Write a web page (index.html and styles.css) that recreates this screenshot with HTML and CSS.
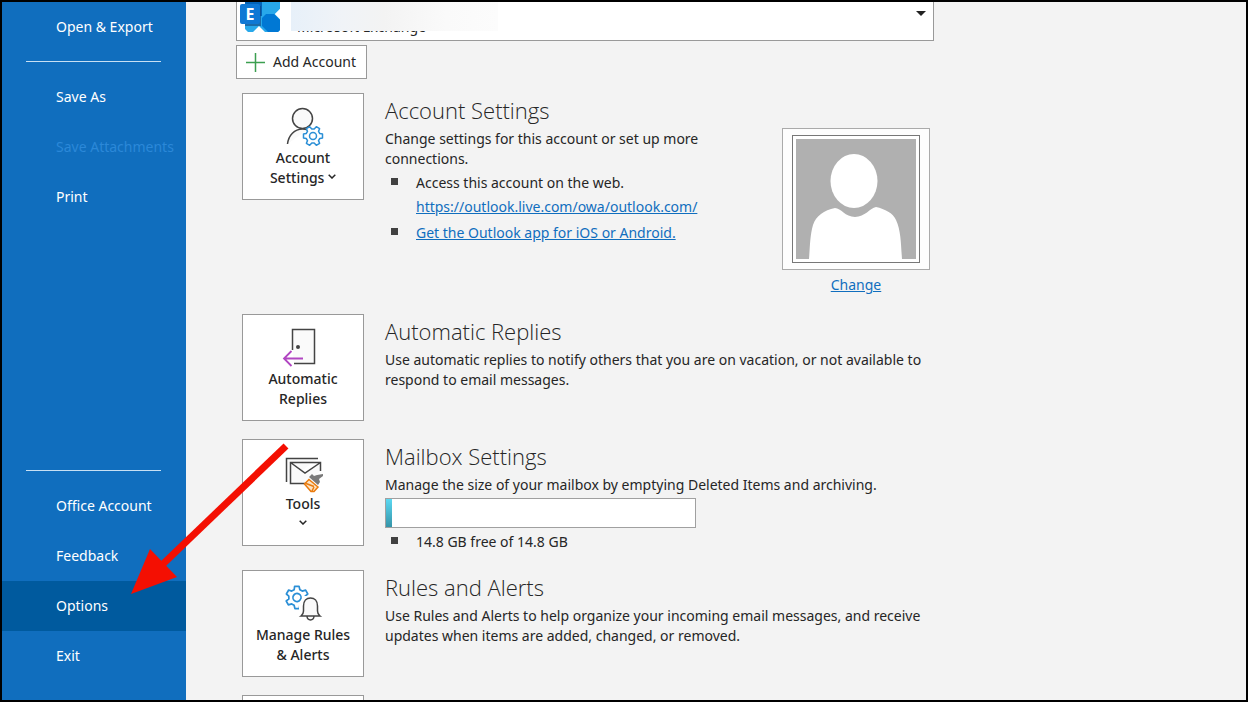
FILE: index.html
```
<!DOCTYPE html>
<html lang="en">

<head>
  <meta charset="UTF-8" />
  <meta name="viewport" content="width=device-width, initial-scale=1.0" />
  <title>Account Information</title>
  <link rel="stylesheet" href="styles.css">
</head>

<body>
  <nav class="sidebar">
    <a class="nav-item" href="#open">Open &amp; Export</a>
    <hr class="nav-rule">
    <a class="nav-item" href="#save">Save As</a>
    <a class="nav-item disabled" aria-disabled="true">Save Attachments</a>
    <a class="nav-item" href="#print">Print</a>
    <div class="nav-bottom">
      <hr class="nav-rule">
      <a class="nav-item" href="#account">Office Account</a>
      <a class="nav-item" href="#feedback">Feedback</a>
      <a class="nav-item active" href="#options">Options</a>
      <a class="nav-item" href="#exit">Exit</a>
    </div>
  </nav>

  <main class="content">
    <div class="account-picker">
      <select class="account-select" aria-label="Account">
        <option>Microsoft Exchange</option>
      </select>
      <svg class="exchange-logo" width="40" height="30" viewBox="0 0 40 30" aria-hidden="true">
        <path fill="#28a8ea" d="M5 0h35v7l-5 5 5 5v11l-2 2H25l-6-6-6 6H8l-3-3z" />
        <path fill="#0364b8" d="M5 0h17v14H5z" />
        <path fill="#fff" d="M40 7v10l-5-5zM19 25l5 5H14z" />
        <path fill="#0078d4" d="M26 12h8l6 6v10l-2 2H28l-6-6v-8z" />
        <path fill="#14447d" opacity=".6" d="M5 4h16v20H5z" />
        <rect width="20" height="20" y="2" rx="2" fill="#0f78d4" />
        <text class="logo-letter" x="10" y="18" text-anchor="middle">E</text>
      </svg>
      <span class="name-mask"></span>
      <svg class="select-arrow" width="10" height="5" viewBox="0 0 10 5" aria-hidden="true">
        <path d="M0 0h10L5 5z" fill="#222" />
      </svg>
    </div>

    <button class="add-btn" type="button">
      <svg width="19" height="19" viewBox="0 0 19 19" aria-hidden="true">
        <path d="M9.5 0v19M0 9.5h19" stroke="#3c9f50" stroke-width="1.5" />
      </svg>
      Add Account
    </button>

    <div class="sections">
      <section class="section">
        <button class="tile" type="button">
          <svg class="tile-icon" viewBox="0 0 42 42" aria-hidden="true">
            <circle cx="20.5" cy="12.5" r="10" class="ink" />
            <path class="ink" d="M5.5 38c1-8.500 7-15 15-15 2 0 3.500.2 5 .8" />
            <g transform="translate(31 30)">
              <path class="gear" d="M9.500-2v4L6.800 2.500 5.500 4.600 6.600 7.300 3.300 9.300 1.200 7.100H-1.200L-3.300 9.300-6.600 7.300-5.500 4.600-6.800 2.500-9.500 2v-4L-6.800-2.500-5.500-4.600-6.600-7.300-3.300-9.300-1.200-7.100H1.200L3.300-9.300 6.600-7.300 5.500-4.600 6.800-2.500z" />
              <circle class="gear" r="3.500" />
            </g>
          </svg>
          <span>Account<br>Settings
            <svg class="chevron" width="8" height="5" viewBox="0 0 8 5" aria-hidden="true"><path d="M.7.700 4 4 7.300.700" /></svg>
          </span>
        </button>
        <div class="details">
          <h2>Account Settings</h2>
          <p>Change settings for this account or set up more connections.</p>
          <ul class="links">
            <li>Access this account on the web.<a class="web-link" href="#owa">https://outlook.live.com/owa/outlook.com/</a></li>
            <li><a href="#mobile">Get the Outlook app for iOS or Android.</a></li>
          </ul>
        </div>
        <div class="photo">
          <div class="photo-card">
            <svg class="avatar" viewBox="0 0 120 120" role="img" aria-label="Account photo">
              <rect width="120" height="120" fill="#b0b0b0" />
              <ellipse cx="58" cy="42" rx="23.500" ry="27" fill="#fff" />
              <path d="M13 120c1-12 1-24 4-34 3-9 11-15 22-17 6 0 10 9 20 9s15-9 21-10c9 2 17 6 20 13 5 10 5 26 6 39z" fill="#fff" />
            </svg>
          </div>
          <a href="#photo">Change</a>
        </div>
      </section>

      <section class="section">
        <button class="tile" type="button">
          <svg class="tile-icon" viewBox="0 0 42 42" aria-hidden="true">
            <path class="ink" d="M10.500 23V2.500h22v34H12" />
            <circle cx="16" cy="20" r="2" fill="#444" />
            <path class="reply" d="M21 31.500H2M9.500 24 2 31.500 9.500 39" />
          </svg>
          <span>Automatic<br>Replies</span>
        </button>
        <div class="details">
          <h2>Automatic Replies</h2>
          <p>Use automatic replies to notify others that you are on vacation, or not available to respond to email messages.</p>
        </div>
      </section>

      <section class="section">
        <button class="tile" type="button">
          <svg class="tile-icon" viewBox="0 0 42 42" aria-hidden="true">
            <path class="ink" d="M4.500 30V6.500H36" />
            <path class="ink" d="M25 31.500H8.500v-21h30V19M8.500 10.500 23 21l15.500-10.500" />
            <path d="M41 22l-6 1-3 1-2-2-3 3 9 8 2-3-1-3 4-3z" fill="#7a7a7a" />
            <path d="M27 27.500 36 35l-4 4.500h-3L22.500 32z" fill="#fbe3c4" stroke="#ea7a0c" stroke-width="1.500" />
            <path d="M24 31.500l8 3M30 39l2-4" stroke="#ea7a0c" stroke-width="1.500" fill="none" />
          </svg>
          <span>Tools<br>
            <svg class="chevron" width="8" height="5" viewBox="0 0 8 5" aria-hidden="true"><path d="M.7.700 4 4 7.300.700" /></svg>
          </span>
        </button>
        <div class="details">
          <h2>Mailbox Settings</h2>
          <p>Manage the size of your mailbox by emptying Deleted Items and archiving.</p>
          <progress class="quota" value="2" max="100" aria-label="Mailbox space used"></progress>
          <ul>
            <li>14.8 GB free of 14.8 GB</li>
          </ul>
        </div>
      </section>

      <section class="section">
        <button class="tile" type="button">
          <svg class="tile-icon" viewBox="0 0 42 42" aria-hidden="true">
            <g transform="translate(15 14.500) rotate(30) scale(1.150)">
              <path class="gear" d="M9.500-2v4L6.800 2.500 5.500 4.600 6.600 7.300 3.300 9.300 1.200 7.100H-1.200L-3.300 9.300-6.600 7.300-5.500 4.600-6.800 2.500-9.500 2v-4L-6.800-2.500-5.500-4.600-6.600-7.300-3.300-9.300-1.200-7.100H1.200L3.300-9.300 6.600-7.300 5.500-4.600 6.800-2.500z" />
              <circle class="gear" r="3.500" />
            </g>
            <path d="M17 33.500V20l5-7h14v20z" fill="#fff" />
            <path class="ink" d="M19 33c2-1.500 2.500-3 2.500-5v-5c0-5 3-8 7-8s7 3 7 8v5c0 2 .5 3.500 2.500 5zM25 33.500c.5 4.500 6.500 4.500 7 0" />
          </svg>
          <span>Manage Rules<br>&amp; Alerts</span>
        </button>
        <div class="details">
          <h2>Rules and Alerts</h2>
          <p>Use Rules and Alerts to help organize your incoming email messages, and receive updates when items are added, changed, or removed.</p>
        </div>
      </section>

      <section class="section">
        <button class="tile" type="button" aria-label="Manage Add-ins"></button>
      </section>
    </div>
  </main>

  <!-- arrow pointing at Options -->
  <svg class="pointer" width="160" height="152" viewBox="0 0 160 152" aria-hidden="true">
    <path d="M157 4 34 122" stroke="#f40f02" stroke-width="7" />
    <path d="M2 152 21 107l27 28z" fill="#f40f02" />
  </svg>
</body>

</html>
```

FILE: styles.css
```
* {
  box-sizing: border-box;
}

body {
  margin: 0;
  height: 100vh;
  display: flex;
  position: relative;
  overflow: hidden;
  border: 2px solid #000;
  background: #f3f3f3;
  color: #262626;
  font-family: "Noto Sans", "Open Sans", sans-serif;
  font-size: 14px;
  line-height: 20px;
}

button,
select {
  font: inherit;
  color: inherit;
  background: #fff;
  border: 1px solid #999;
  border-radius: 0;
}

a {
  color: #106ebe;
}

/* sidebar */
.sidebar {
  width: 184px;
  flex-shrink: 0;
  display: flex;
  flex-direction: column;
  padding-bottom: 19px;
  background: #106ebe;
}

.nav-item {
  display: block;
  padding: 15px 0 15px 54px;
  color: #fff;
  text-decoration: none;
  white-space: nowrap;
}

.nav-item.active {
  background: #005a9e;
}

.nav-item.disabled {
  color: #2b88d8;
}

.nav-rule {
  width: 135px;
  margin: 9px 24px 10px;
  border: none;
  border-top: 1px solid #c7e0f4;
}

.nav-bottom {
  margin-top: auto;
}

/* content */
.content {
  flex: 1;
  padding-left: 50px;
  overflow: hidden;
}

.account-picker {
  position: relative;
  max-width: 698px;
}

.account-select {
  display: block;
  width: 100%;
  height: 39px;
  padding: 12px 30px 0 60px;
  border-top: none;
  appearance: none;
}

.exchange-logo {
  position: absolute;
  top: 0;
  left: 4px;
}

.logo-letter {
  fill: #fff;
  font-size: 16px;
  font-weight: 700;
}

.name-mask {
  position: absolute;
  top: 0;
  left: 55px;
  width: 207px;
  height: 29px;
  background: linear-gradient(90deg, #e7f0f9, #f0f3f7 25%, #f3f3f3 45%, #fafafa 75%, #fcfcfc);
}

.select-arrow {
  position: absolute;
  top: 9px;
  right: 8px;
}

.add-btn {
  display: flex;
  align-items: center;
  gap: 8px;
  height: 34px;
  margin-top: 4px;
  padding: 0 10px 0 9px;
}

.sections {
  display: flex;
  flex-direction: column;
  gap: 18px;
  max-width: 698px;
  margin-top: 14px;
  padding-left: 6px;
}

.section {
  display: flex;
  align-items: flex-start;
}

.tile {
  width: 122px;
  height: 107px;
  flex-shrink: 0;
  display: flex;
  flex-direction: column;
  align-items: center;
  padding: 12px 0 0;
  font-weight: 500;
}

.tile-icon {
  width: 42px;
  height: 42px;
}

.ink {
  fill: #fafafa;
  stroke: #444;
  stroke-width: 1.5;
}

.gear {
  fill: #fff;
  stroke: #2b8fd6;
  stroke-width: 1.5;
  stroke-linejoin: round;
}

.reply {
  fill: none;
  stroke: #b146c2;
  stroke-width: 1.8;
}

.chevron {
  margin-bottom: 4px;
  vertical-align: baseline;
  fill: none;
  stroke: #262626;
  stroke-width: 1.5;
}

.details {
  flex: 1;
  padding-left: 21px;
}

h2 {
  margin: 0 0 2px;
  font-family: "Open Sans", "Noto Sans", sans-serif;
  font-size: 22px;
  font-weight: 300;
  line-height: 34px;
}

p {
  margin: 0;
}

ul {
  margin: 4px 0 0;
  padding: 0;
  list-style: none;
}

li {
  position: relative;
  padding-left: 31px;
}

li::before {
  content: "";
  position: absolute;
  top: 5px;
  left: 6px;
  width: 7px;
  height: 7px;
  background: #404040;
}

.links a {
  display: block;
}

.links .web-link {
  margin-top: 4px;
}

.links li + li {
  margin-top: 6px;
}

.photo {
  width: 148px;
  margin: 35px 4px 1px 62px;
  display: flex;
  flex-direction: column;
  align-items: center;
  gap: 5px;
}

.photo-card {
  width: 100%;
  padding: 6px 9px;
  border: 1px solid #aaa;
  background: #fdfdfd;
}

.avatar {
  display: block;
  width: 100%;
  padding: 3px;
  border: 1px solid #777;
  background: #fff;
}

.quota {
  display: block;
  width: 311px;
  height: 30px;
  margin-top: 3px;
  border: 1px solid #a0a0a0;
  background: #fff;
  appearance: none;
}

.quota::-webkit-progress-bar {
  background: #fff;
}

.quota::-webkit-progress-value {
  background: linear-gradient(#5bd8f2, #3594a8);
}

/* lies over the sidebar and the tiles */
.pointer {
  position: absolute;
  top: 440px;
  left: 127px;
}
```
